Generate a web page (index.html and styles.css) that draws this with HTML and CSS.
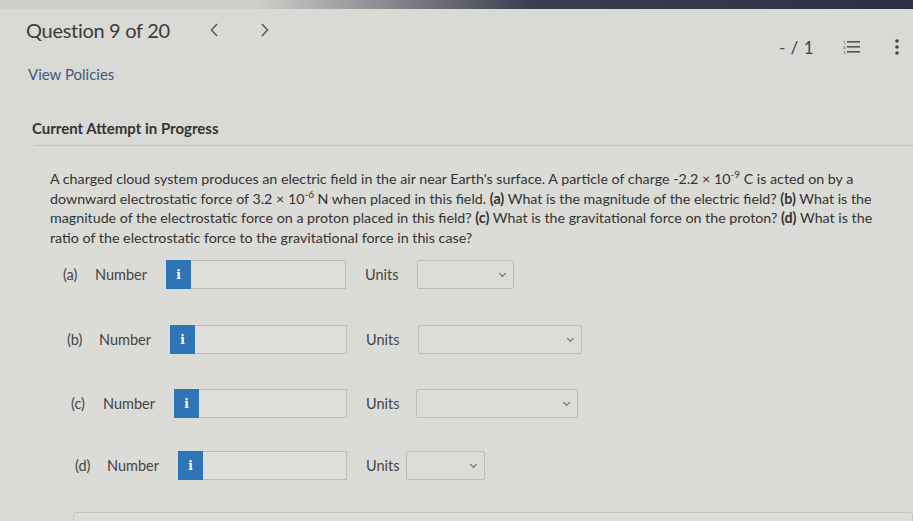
FILE: index.html
```html
<!DOCTYPE html>
<html>
<head>
<meta charset="utf-8">
<link rel="stylesheet" href="styles.css">
</head>
<body>
<div class="topbar"></div>
<header class="head">
  <div class="head-left">
    <h1 class="qtitle">Question 9 of 20</h1>
    <svg class="nav prev" width="8" height="14" viewBox="0 0 8 14"><path d="M7 1 L1.5 7 L7 13" fill="none" stroke="#555" stroke-width="1.4"/></svg>
    <svg class="nav next" width="8" height="14" viewBox="0 0 8 14"><path d="M1 1 L6.5 7 L1 13" fill="none" stroke="#555" stroke-width="1.4"/></svg>
  </div>
  <div class="head-right">
    <span class="score">- / 1</span>
    <svg class="listicon" width="18" height="16" viewBox="0 0 18 16">
      <text x="0" y="4.5" font-size="4.5" font-family="Lato" fill="#555">1</text>
      <text x="0" y="9.5" font-size="4.5" font-family="Lato" fill="#555">2</text>
      <text x="0" y="14.5" font-size="4.5" font-family="Lato" fill="#555">3</text>
      <rect x="4" y="2" width="13" height="1.6" fill="#555"/>
      <rect x="4" y="7" width="13" height="1.6" fill="#555"/>
      <rect x="4" y="12" width="13" height="1.6" fill="#555"/>
    </svg>
    <svg class="dots" width="6" height="16" viewBox="0 0 6 16">
      <circle cx="3" cy="2" r="1.8" fill="#444"/>
      <circle cx="3" cy="8" r="1.8" fill="#444"/>
      <circle cx="3" cy="14" r="1.8" fill="#444"/>
    </svg>
  </div>
</header>
<a class="policies">View Policies</a>
<main class="content">
  <h2 class="attempt">Current Attempt in Progress</h2>
  <section class="panel">
    <p class="question">A charged cloud system produces an electric field in the air near Earth's surface. A particle of charge -2.2 &times; 10<sup>-9</sup> C is acted on by a<br>downward electrostatic force of 3.2 &times; 10<sup>-6</sup> N when placed in this field. <b>(a)</b> What is the magnitude of the electric field? <b>(b)</b> What is the<br>magnitude of the electrostatic force on a proton placed in this field? <b>(c)</b> What is the gravitational force on the proton? <b>(d)</b> What is the<br>ratio of the electrostatic force to the gravitational force in this case?</p>

    <div class="row row-a">
      <span class="part">(a)</span><span class="lbl">Number</span>
      <div class="field"><span class="info">i</span><span class="input"></span></div>
      <span class="units">Units</span>
      <div class="select sel-a"><span class="caret"></span></div>
    </div>
    <div class="row row-b">
      <span class="part">(b)</span><span class="lbl">Number</span>
      <div class="field"><span class="info">i</span><span class="input"></span></div>
      <span class="units">Units</span>
      <div class="select sel-b"><span class="caret"></span></div>
    </div>
    <div class="row row-c">
      <span class="part">(c)</span><span class="lbl">Number</span>
      <div class="field"><span class="info">i</span><span class="input"></span></div>
      <span class="units">Units</span>
      <div class="select sel-c"><span class="caret"></span></div>
    </div>
    <div class="row row-d">
      <span class="part">(d)</span><span class="lbl">Number</span>
      <div class="field"><span class="info">i</span><span class="input"></span></div>
      <span class="units">Units</span>
      <div class="select sel-d"><span class="caret"></span></div>
    </div>
    <div class="nextbox"></div>
  </section>
</main>
</body>
</html>
```
FILE: styles.css
```css
* { box-sizing: border-box; }
html, body { margin: 0; padding: 0; }
body {
  width: 913px;
  height: 521px;
  overflow: hidden;
  background: #d9d9d5;
  font-family: Lato, "Open Sans", sans-serif;
  color: #3a3a3a;
}
.topbar {
  height: 9px;
  background: linear-gradient(90deg, #cfcfcb 0%, #cfcfcb 28%, #3a3e4e 58%, #2c3042 100%);
}
.head {
  display: flex;
  justify-content: space-between;
  padding: 6px 13px 0 26px;
  height: 56px;
}
.head-left { display: flex; align-items: center; height: 30px; }
.qtitle {
  margin: 0;
  font-weight: 400;
  font-size: 20px;
  color: #3c3c3c;
  letter-spacing: -0.3px;
}
.nav.prev { margin-left: 40px; }
.nav.next { margin-left: 43px; }
.head-right {
  display: flex;
  align-items: center;
  margin-top: 22px;
  height: 20px;
}
.score { font-size: 17px; color: #444; letter-spacing: 0.5px; }
.listicon { margin-left: 29px; }
.dots { margin-left: 33px; }
.policies {
  display: block;
  margin: 0 0 0 28px;
  font-size: 15px;
  color: #3d5a80;
  height: 38px;
}
.content { padding: 0 0 0 32px; }
.attempt {
  margin: 16px 0 0 0;
  font-size: 15px;
  font-weight: 700;
  color: #333;
  height: 26px;
}
.panel {
  border-top: 1px solid #c9c9c5;
  margin-left: 2px;
  background: #dbdbd7;
  height: 400px;
  padding: 23px 0 0 16px;
}
.question {
  margin: 0;
  font-size: 14.25px;
  line-height: 19.5px;
  white-space: nowrap;
  color: #333;
}
.question sup { font-size: 10px; line-height: 0; }
.question b { font-weight: 700; }
.row {
  display: flex;
  align-items: center;
  height: 29px;
  font-size: 14.5px;
  color: #444;
}
.row-a { margin-top: 13px; padding-left: 13px; }
.row-b { margin-top: 36px; padding-left: 17px; }
.row-c { margin-top: 35px; padding-left: 21px; }
.row-d { margin-top: 33px; padding-left: 25px; }
.part { width: 32px; }
.lbl { width: 71px; }
.field {
  display: flex;
  height: 29px;
}
.row-a .field { width: 180px; }
.row-b .field { width: 177px; }
.row-c .field { width: 173px; }
.row-d .field { width: 169px; }
.info {
  width: 25px;
  background: #2f74b7;
  color: #fff;
  font-family: "DejaVu Serif", serif;
  font-weight: 700;
  font-size: 12px;
  display: flex;
  align-items: center;
  justify-content: center;
}
.input {
  flex: 1;
  background: #dededa;
  border: 1px solid #bdbdb9;
  border-left: none;
}
.units { margin-left: 19px; width: 52px; }
.select {
  position: relative;
  height: 29px;
  border: 1px solid #bdbdb9;
  background: #dddcd8;
  border-radius: 2px;
}
.sel-a { width: 97px; }
.sel-b { width: 164px; }
.sel-c { width: 162px; margin-left: -2px; }
.sel-d { width: 79px; margin-left: -12px; }
.caret {
  position: absolute;
  right: 8px;
  top: 10px;
  width: 5px;
  height: 5px;
  border-right: 1px solid #666;
  border-bottom: 1px solid #666;
  transform: rotate(45deg);
}
.nextbox {
  margin: 32px 0 0 23px;
  height: 20px;
  border: 1px solid #c5c5c1;
  border-radius: 3px;
  background: #dddcd8;
}
```
